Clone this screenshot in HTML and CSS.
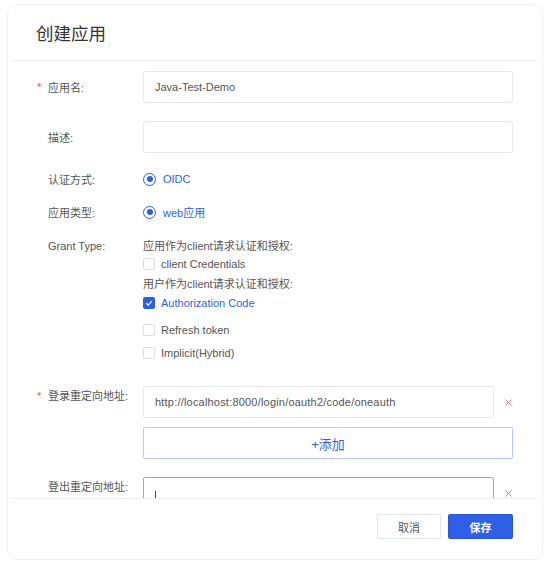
FILE: index.html
```html
<!DOCTYPE html>
<html lang="zh-CN">
<head>
<meta charset="utf-8">
<title>创建应用</title>
<link rel="stylesheet" href="styles.css">
</head>
<body>
<div class="modal">
  <div class="modal-head"><h1 class="modal-title">创建应用</h1></div>

  <div class="modal-body">
    <div class="row row-name">
      <label class="lbl"><span class="star">*</span>应用名:</label>
      <div class="ctl"><input class="field" type="text" value="Java-Test-Demo"></div>
    </div>

    <div class="row row-desc">
      <label class="lbl"><span class="nostar"></span>描述:</label>
      <div class="ctl"><input class="field" type="text" value=""></div>
    </div>

    <div class="row row-auth">
      <label class="lbl"><span class="nostar"></span>认证方式:</label>
      <div class="ctl"><span class="radio"><span class="radio-dot"></span>OIDC</span></div>
    </div>

    <div class="row row-type">
      <label class="lbl"><span class="nostar"></span>应用类型:</label>
      <div class="ctl"><span class="radio"><span class="radio-dot"></span>web应用</span></div>
    </div>

    <div class="row row-grant">
      <label class="lbl grant-lbl"><span class="nostar"></span>Grant Type:</label>
      <div class="ctl grant-list">
        <div class="gline">应用作为client请求认证和授权:</div>
        <div class="gline"><span class="check"></span>client Credentials</div>
        <div class="gline">用户作为client请求认证和授权:</div>
        <div class="gline g-auth on"><span class="check checked"><svg viewBox="0 0 12 12" width="12" height="12"><path d="M2.6 6.2 L5 8.5 L9.4 3.8" fill="none" stroke="#fff" stroke-width="1.5"/></svg></span>Authorization Code</div>
        <div class="gline g-refresh"><span class="check"></span>Refresh token</div>
        <div class="gline g-implicit"><span class="check"></span>Implicit(Hybrid)</div>
      </div>
    </div>

    <div class="row row-login">
      <label class="lbl top"><span class="star">*</span>登录重定向地址:</label>
      <div class="ctl">
        <div class="url-line">
          <input class="field url" type="text" value="http://localhost:8000/login/oauth2/code/oneauth">
          <span class="del"><svg viewBox="0 0 7 7" width="7" height="7"><path d="M0.5 0.5 L6.5 6.5 M6.5 0.5 L0.5 6.5" stroke="#ec7a7a" stroke-width="1"/></svg></span>
        </div>
        <button class="add-btn" type="button">+添加</button>
      </div>
    </div>

    <div class="row row-logout">
      <label class="lbl top"><span class="nostar"></span>登出重定向地址:</label>
      <div class="ctl">
        <div class="url-line">
          <div class="field url focus"><span class="caret"></span></div>
          <span class="del"><svg viewBox="0 0 7 7" width="7" height="7"><path d="M0.5 0.5 L6.5 6.5 M6.5 0.5 L0.5 6.5" stroke="#ec7a7a" stroke-width="1"/></svg></span>
        </div>
      </div>
    </div>
  </div>

  <div class="modal-foot">
    <button class="btn" type="button">取消</button>
    <button class="btn primary" type="button">保存</button>
  </div>
</div>
</body>
</html>
```

FILE: styles.css
```css
* { box-sizing: border-box; }

body {
  margin: 0;
  background: #fff;
  font-family: "Liberation Sans", "Noto Sans CJK SC", sans-serif;
  color: #555;
}

.modal {
  margin: 4px 0 0 7px;
  width: 536px;
  height: 556px;
  border: 1px solid #eff1f3;
  border-radius: 10px;
  padding: 0 5px 0 4px;
  display: flex;
  flex-direction: column;
  overflow: hidden;
  background: #fff;
}

.modal-head {
  height: 56px;
  flex: none;
  border-bottom: 1px solid #e9eaec;
  display: flex;
  align-items: center;
  padding-left: 24px;
}

.modal-title {
  margin: 0;
  font-size: 17.5px;
  font-weight: normal;
  color: #333;
}

.modal-body {
  height: 438px;
  flex: none;
  border-bottom: 1px solid #e9eaec;
  overflow: hidden;
  padding: 10px 24px 0 25px;
}

/* form rows */
.row {
  display: flex;
  align-items: center;
  font-size: 11px;
}

.lbl {
  width: 106px;
  flex: none;
  display: flex;
  align-items: center;
  color: #555;
  white-space: nowrap;
}

.lbl.top { align-self: flex-start; line-height: 16px; padding-top: 2px; }

.star {
  width: 11px;
  color: #e65454;
  font-size: 11px;
  flex: none;
}
.nostar { width: 11px; flex: none; }

.ctl { flex: 1; min-width: 0; }

.field {
  display: block;
  width: 100%;
  height: 32px;
  border: 1px solid #e6e7e9;
  border-radius: 2px;
  padding: 0 11px;
  font: inherit;
  font-size: 11px;
  color: #555;
  outline: none;
  background: #fff;
}

.field.url { letter-spacing: 0.2px; }

.row-desc { margin-top: 18px; }

.row-auth { margin-top: 16px; height: 20px; }
.row-type { margin-top: 13px; height: 20px; }

.radio {
  display: inline-flex;
  align-items: center;
  color: #2e5fe2;
}
.radio-dot {
  width: 13px;
  height: 13px;
  border: 1px solid #2e5fe2;
  border-radius: 50%;
  margin-right: 7px;
  display: inline-flex;
  align-items: center;
  justify-content: center;
}
.radio-dot::after {
  content: "";
  width: 6px;
  height: 6px;
  border-radius: 50%;
  background: #2e5fe2;
}

/* grant types */
.row-grant { margin-top: 13px; align-items: flex-start; }
.grant-lbl { line-height: 19px; padding-top: 2px; }

.gline {
  height: 19px;
  display: flex;
  align-items: center;
  color: #555;
  white-space: nowrap;
}
.g-auth { margin-top: 1px; }
.g-refresh { margin-top: 8px; }
.g-implicit { margin-top: 4px; }
.gline.on { color: #2e5fe2; }

.check {
  width: 12px;
  height: 12px;
  border: 1px solid #dcdde0;
  border-radius: 2px;
  margin-right: 6px;
  flex: none;
  display: inline-flex;
  align-items: center;
  justify-content: center;
  background: #fff;
}
.check.checked {
  background: #2e5fe2;
  border-color: #2e5fe2;
}
.check svg { display: block; }

/* redirect addresses */
.row-login { margin-top: 24px; align-items: flex-start; }
.row-logout { margin-top: 18px; align-items: flex-start; }

.url-line {
  display: flex;
  align-items: center;
}
.url-line .field { width: 351px; flex: none; }
.del {
  margin-left: 11px;
  display: inline-flex;
}
.del svg { display: block; }

.add-btn {
  display: block;
  width: 100%;
  height: 32px;
  margin-top: 9px;
  border: 1px solid #b9c7f6;
  border-radius: 2px;
  background: #fff;
  color: #2e5fe2;
  font-family: inherit;
  font-size: 13px;
  padding: 0;
}

.field.focus {
  border-color: #8fa3f0;
  display: flex;
  align-items: center;
}
.caret {
  width: 1px;
  height: 12px;
  background: #444;
  margin-top: 8px;
}

/* footer */
.modal-foot {
  flex: 1;
  display: flex;
  justify-content: flex-end;
  align-items: flex-start;
  padding: 15px 24px 0 0;
  gap: 7px;
}

.btn {
  height: 25px;
  width: 64px;
  border: 1px solid #e3e4e7;
  border-radius: 2px;
  background: #fff;
  color: #555;
  font-family: inherit;
  font-size: 11px;
  padding: 0;
}
.btn.primary {
  width: 65px;
  background: #2e5fe6;
  border-color: #2a57d8;
  color: #fff;
  font-weight: bold;
}
```
